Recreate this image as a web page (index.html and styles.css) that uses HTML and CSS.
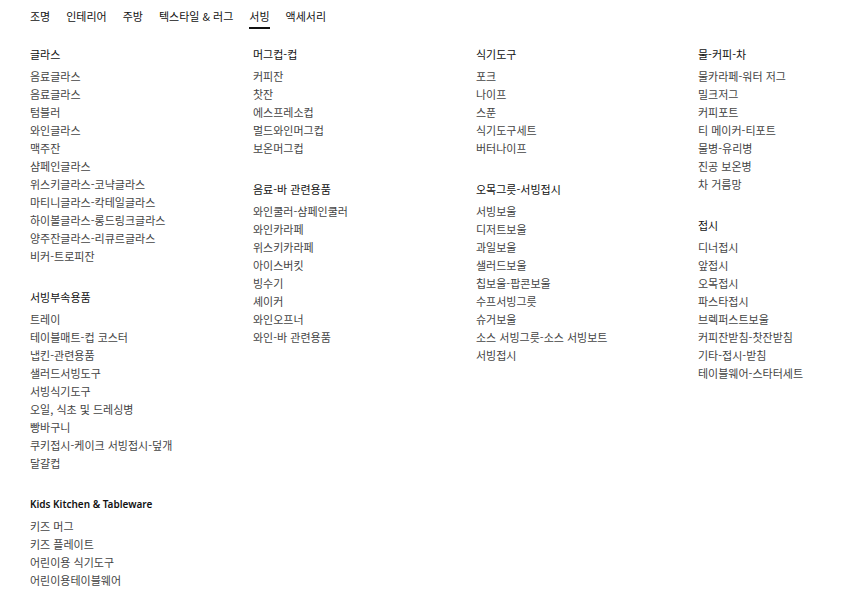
FILE: index.html
```html
<!DOCTYPE html>
<html lang="ko">
<head>
<meta charset="utf-8">
<link rel="stylesheet" href="styles.css">
</head>
<body>
<nav class="tabs">
  <a class="tab">조명</a>
  <a class="tab">인테리어</a>
  <a class="tab">주방</a>
  <a class="tab">텍스타일 &amp; 러그</a>
  <a class="tab active">서빙</a>
  <a class="tab">액세서리</a>
</nav>
<main class="grid">
  <div class="col">
    <section class="sec">
      <h3 class="head">글라스</h3>
      <ul class="list">
        <li>음료글라스</li><li>음료글라스</li><li>텀블러</li><li>와인글라스</li><li>맥주잔</li><li>샴페인글라스</li><li>위스키글라스-코냑글라스</li><li>마티니글라스-칵테일글라스</li><li>하이볼글라스-롱드링크글라스</li><li>양주잔글라스-리큐르글라스</li><li>비커-트로피잔</li>
      </ul>
    </section>
    <section class="sec">
      <h3 class="head">서빙부속용품</h3>
      <ul class="list">
        <li>트레이</li><li>테이블매트-컵 코스터</li><li>냅킨-관련용품</li><li>샐러드서빙도구</li><li>서빙식기도구</li><li>오일, 식초 및 드레싱병</li><li>빵바구니</li><li>쿠키접시-케이크 서빙접시-덮개</li><li>달걀컵</li>
      </ul>
    </section>
    <section class="sec">
      <h3 class="head latin">Kids Kitchen &amp; Tableware</h3>
      <ul class="list">
        <li>키즈 머그</li><li>키즈 플레이트</li><li>어린이용 식기도구</li><li>어린이용테이블웨어</li>
      </ul>
    </section>
  </div>
  <div class="col">
    <section class="sec">
      <h3 class="head">머그컵-컵</h3>
      <ul class="list">
        <li>커피잔</li><li>찻잔</li><li>에스프레소컵</li><li>멀드와인머그컵</li><li>보온머그컵</li>
      </ul>
    </section>
    <section class="sec">
      <h3 class="head">음료-바 관련용품</h3>
      <ul class="list">
        <li>와인쿨러-샴페인쿨러</li><li>와인카라페</li><li>위스키카라페</li><li>아이스버킷</li><li>빙수기</li><li>셰이커</li><li>와인오프너</li><li>와인-바 관련용품</li>
      </ul>
    </section>
  </div>
  <div class="col">
    <section class="sec">
      <h3 class="head">식기도구</h3>
      <ul class="list">
        <li>포크</li><li>나이프</li><li>스푼</li><li>식기도구세트</li><li>버터나이프</li>
      </ul>
    </section>
    <section class="sec">
      <h3 class="head">오목그릇-서빙접시</h3>
      <ul class="list">
        <li>서빙보울</li><li>디저트보울</li><li>과일보울</li><li>샐러드보울</li><li>칩보울-팝콘보울</li><li>수프서빙그릇</li><li>슈거보울</li><li>소스 서빙그릇-소스 서빙보트</li><li>서빙접시</li>
      </ul>
    </section>
  </div>
  <div class="col">
    <section class="sec">
      <h3 class="head">물-커피-차</h3>
      <ul class="list">
        <li>물카라페-워터 저그</li><li>밀크저그</li><li>커피포트</li><li>티 메이커-티포트</li><li>물병-유리병</li><li>진공 보온병</li><li>차 거름망</li>
      </ul>
    </section>
    <section class="sec">
      <h3 class="head">접시</h3>
      <ul class="list">
        <li>디너접시</li><li>앞접시</li><li>오목접시</li><li>파스타접시</li><li>브렉퍼스트보울</li><li>커피잔받침-찻잔받침</li><li>기타-접시-받침</li><li>테이블웨어-스타터세트</li>
      </ul>
    </section>
  </div>
</main>
</body>
</html>
```

FILE: styles.css
```css
html, body {
  margin: 0;
  padding: 0;
  background: #fff;
}
body {
  font-family: "Noto Sans CJK KR", "Noto Sans", sans-serif;
  color: #111;
}
.tabs {
  display: flex;
  gap: 16px;
  padding: 7px 0 0 30px;
  height: 23px;
}
.tab {
  font-size: 11px;
  line-height: 18px;
  color: #111;
  height: 22px;
  box-sizing: border-box;
}
.tab.active {
  border-bottom: 2px solid #111;
}
.grid {
  display: grid;
  grid-template-columns: 223px 223px 222px 150px;
  padding: 15px 0 0 30px;
}
.sec {
  margin-bottom: 23px;
}
.head {
  margin: 0 0 4px;
  font-size: 11px;
  line-height: 18px;
  font-weight: 400;
  color: #111;
}
.head.latin {
  font-family: "Noto Sans", sans-serif;
  font-weight: 600;
  font-size: 10px;
  color: #111;
}
.list {
  list-style: none;
  margin: 0;
  padding: 0;
}
.list li {
  font-size: 11px;
  line-height: 18px;
  color: #444;
  white-space: nowrap;
}
```
